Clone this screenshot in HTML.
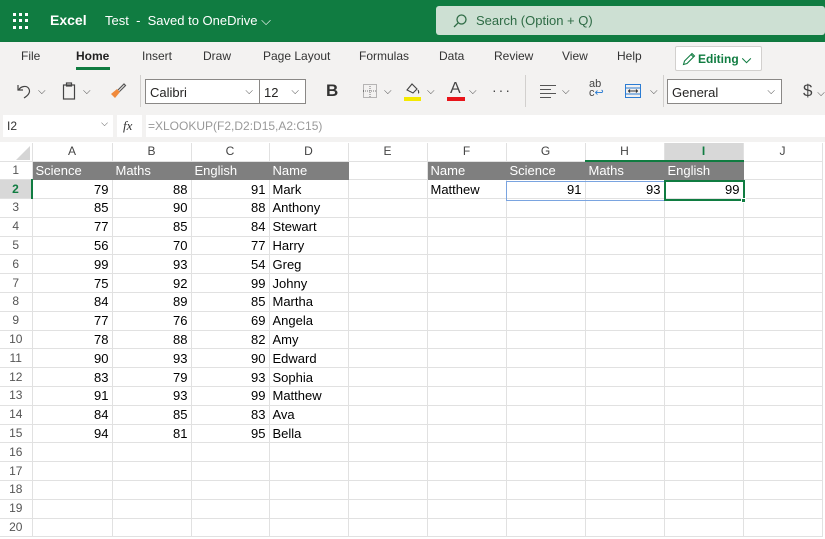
<!DOCTYPE html>
<html><head><meta charset="utf-8"><style>
*{box-sizing:border-box;margin:0;padding:0}
body{width:825px;height:539px;overflow:hidden;background:#fff;font-family:"Liberation Sans",sans-serif;position:relative;color:#252423}
.a{position:absolute}
.top{left:0;top:0;width:825px;height:42px;background:#107c41;color:#fff}
.rib{left:0;top:42px;width:825px;height:70px;background:#f3f2f1;box-shadow:0 1px 3px rgba(0,0,0,.15)}
.tab{top:49px;font-size:12px;color:#333}
.box{background:#fff;border:1px solid #8a8886;height:25px;top:79px;font-size:13px;padding:5px 4px}
.chev{font-size:10px;color:#444}
.fb{left:0;top:112px;width:825px;height:30px;background:#f3f2f1}
table{position:absolute;left:0;top:143px;border-collapse:collapse;table-layout:fixed;font-size:13px}
td{border:1px solid #e1e1e1;height:18.8px;padding:0 3px;white-space:nowrap;overflow:hidden;line-height:17px;color:#000}
td:first-child{border-left:none}
tr.h td{height:18px;background:#fff;color:#444;text-align:center;font-size:12px;border-color:#e1e1e1;border-top:none}
td.r{background:#fff;color:#555;text-align:center;font-size:12px;padding:0}
td.n{text-align:right}
td.g{background:#7f7f7f;color:#fff;border-color:#7f7f7f}
</style></head><body>
<div class="a top">
 <div class="a" style="left:13px;top:13px;width:16px;height:16px;display:grid;grid-template-columns:repeat(3,3px);gap:3px">
  <i style="background:#fff;width:3px;height:3px"></i><i style="background:#fff;width:3px;height:3px"></i><i style="background:#fff;width:3px;height:3px"></i><i style="background:#fff;width:3px;height:3px"></i><i style="background:#fff;width:3px;height:3px"></i><i style="background:#fff;width:3px;height:3px"></i><i style="background:#fff;width:3px;height:3px"></i><i style="background:#fff;width:3px;height:3px"></i><i style="background:#fff;width:3px;height:3px"></i>
 </div>
 <div class="a" style="left:50px;top:12px;font-size:14px;font-weight:bold">Excel</div>
 <div class="a" style="left:105px;top:13px;font-size:13px">Test &nbsp;-&nbsp; Saved to OneDrive ⌵</div>
 <div class="a" style="left:436px;top:6px;width:389px;height:29px;background:#cde0d3;border-radius:3px;color:#2e6b45;font-size:13px;padding:7px 0 0 40px">Search (Option + Q)
  <svg class="a" style="left:16px;top:7px" width="16" height="16" viewBox="0 0 16 16" fill="none" stroke="#2e6b45" stroke-width="1.3"><circle cx="9.5" cy="6.5" r="4.5"/><path d="M6.3 9.7L2 14"/></svg></div>
</div>
<div class="a rib"></div>
<div class="a tab" style="left:21px">File</div>
<div class="a tab" style="left:76px;font-weight:bold;color:#222">Home</div>
<div class="a" style="left:76px;top:67px;width:34px;height:3px;background:#107c41"></div>
<div class="a tab" style="left:142px">Insert</div>
<div class="a tab" style="left:203px">Draw</div>
<div class="a tab" style="left:263px">Page Layout</div>
<div class="a tab" style="left:359px">Formulas</div>
<div class="a tab" style="left:439px">Data</div>
<div class="a tab" style="left:494px">Review</div>
<div class="a tab" style="left:562px">View</div>
<div class="a tab" style="left:617px">Help</div>
<div class="a" style="left:675px;top:46px;width:87px;height:25px;background:#fff;border:1px solid #d2d0ce;border-radius:2px;color:#107c41;font-size:12px;font-weight:bold;padding:5px 0 0 22px">Editing ⌵
 <svg class="a" style="left:6px;top:5px" width="14" height="14" viewBox="0 0 14 14" fill="none" stroke="#107c41" stroke-width="1.1"><path d="M1.5 12.5L2.5 9L10 1.5L12.5 4L5 11.5Z M9 2.5L11.5 5"/></svg></div>
<!-- toolbar -->
<svg class="a" style="left:16px;top:83px" width="18" height="16" viewBox="0 0 18 16" fill="none" stroke="#444" stroke-width="1.2"><path d="M2 2V7H7"/><path d="M2.5 7C5 3 11 2 13 6C15 10 11 13 8 15"/></svg>
<div class="a chev" style="left:38px;top:86px">⌵</div>
<svg class="a" style="left:62px;top:82px" width="14" height="18" viewBox="0 0 14 18" fill="none" stroke="#444" stroke-width="1.2"><rect x="1.5" y="3" width="11" height="14"/><rect x="4.5" y="1" width="5" height="3"/></svg>
<div class="a chev" style="left:83px;top:86px">⌵</div>
<svg class="a" style="left:109px;top:82px" width="18" height="18" viewBox="0 0 18 18"><path d="M2 12L8 7L11 10L6 16Z" fill="#f08a3c"/><path d="M9 8L15 2L16.5 3.5L10.5 9.5" fill="none" stroke="#555" stroke-width="1.2"/></svg>
<div class="a" style="left:140px;top:75px;width:1px;height:32px;background:#d2d0ce"></div>
<div class="a box" style="left:145px;width:115px">Calibri<span class="a chev" style="right:6px;top:6px">⌵</span></div>
<div class="a box" style="left:259px;width:47px">12<span class="a chev" style="right:6px;top:6px">⌵</span></div>
<div class="a" style="left:326px;top:81px;font-size:17px;font-weight:bold;color:#333">B</div>
<svg class="a" style="left:362px;top:83px" width="16" height="16" viewBox="0 0 16 16" fill="none" stroke="#777" stroke-width="1" stroke-dasharray="1 1"><rect x="1.5" y="1.5" width="13" height="13"/><path d="M8 1V15M1 8H15"/></svg>
<div class="a chev" style="left:384px;top:86px">⌵</div>
<svg class="a" style="left:404px;top:81px" width="18" height="16" viewBox="0 0 18 16" fill="none" stroke="#444" stroke-width="1.1"><path d="M3 9L8 3L13 8L9 12Z"/><path d="M14 9C15 11 15 12 14 12"/></svg>
<div class="a" style="left:404px;top:97px;width:17px;height:4px;background:#f4e900"></div>
<div class="a chev" style="left:427px;top:86px">⌵</div>
<div class="a" style="left:450px;top:80px;font-size:16px;color:#444">A</div>
<div class="a" style="left:447px;top:97px;width:18px;height:4px;background:#e8141a"></div>
<div class="a chev" style="left:469px;top:86px">⌵</div>
<div class="a" style="left:492px;top:82px;font-size:14px;color:#444;letter-spacing:2px">···</div>
<div class="a" style="left:525px;top:75px;width:1px;height:32px;background:#d2d0ce"></div>
<svg class="a" style="left:540px;top:84px" width="16" height="15" viewBox="0 0 16 15" stroke="#555" stroke-width="1"><path d="M0 1.5H16M0 5.5H11M0 9.5H16M0 13.5H11"/></svg>
<div class="a chev" style="left:562px;top:86px">⌵</div>
<div class="a" style="left:589px;top:80px;font-size:11px;color:#444;line-height:9px">ab<br>c<span style="color:#2b7cd3">↩</span></div>
<svg class="a" style="left:624px;top:83px" width="18" height="16" viewBox="0 0 18 16" fill="none" stroke="#2b7cd3" stroke-width="1"><rect x="1.5" y="1.5" width="15" height="13"/><path d="M1 5H17M1 11H17"/><path d="M5 8H13M6 6.5L4.5 8L6 9.5M12 6.5L13.5 8L12 9.5" stroke="#333"/></svg>
<div class="a chev" style="left:650px;top:86px">⌵</div>
<div class="a" style="left:663px;top:75px;width:1px;height:32px;background:#d2d0ce"></div>
<div class="a box" style="left:667px;width:115px">General<span class="a chev" style="right:6px;top:6px">⌵</span></div>
<div class="a" style="left:803px;top:81px;font-size:17px;color:#444;white-space:nowrap">$ <span style="font-size:10px">⌵</span></div>
<!-- formula bar -->
<div class="a fb"></div>
<div class="a" style="left:3px;top:115px;width:110px;height:22px;background:#fff;font-size:12px;padding:4px 4px;color:#333">I2<span class="a chev" style="right:5px;top:3px;font-size:9px">⌵</span></div>
<div class="a" style="left:117px;top:115px;width:25px;height:22px;background:#fff;font-family:'Liberation Serif',serif;font-style:italic;font-size:13px;padding:3px 6px;color:#333">fx</div>
<div class="a" style="left:146px;top:115px;width:679px;height:22px;background:#fff;font-size:12px;padding:4px 2px;color:#999">=XLOOKUP(F2,D2:D15,A2:C15)</div>
<table>
<colgroup><col style="width:32px"><col style="width:80px"><col style="width:79px"><col style="width:78px"><col style="width:79px"><col style="width:79px"><col style="width:79px"><col style="width:79px"><col style="width:79px"><col style="width:79px"><col style="width:79px"></colgroup>
<tr class="h"><td style="position:relative"><svg class="a" style="left:16px;top:3px" width="14" height="14"><path d="M14 0V14H0Z" fill="#d5d5d5"/></svg></td><td>A</td><td>B</td><td>C</td><td>D</td><td>E</td><td>F</td><td>G</td><td style="border-bottom:2px solid #107c41">H</td><td style="background:#d8d8d8;color:#107c41;font-weight:bold;border-bottom:2px solid #107c41">I</td><td>J</td></tr>
<tr><td class="r">1</td><td class="g">Science</td><td class="g">Maths</td><td class="g">English</td><td class="g">Name</td><td></td><td class="g">Name</td><td class="g">Science</td><td class="g">Maths</td><td class="g">English</td><td></td></tr>
<tr><td class="r" style="background:#d8d8d8;color:#107c41;font-weight:bold;border-right:2px solid #107c41">2</td><td class="n">79</td><td class="n">88</td><td class="n">91</td><td>Mark</td><td></td><td>Matthew</td><td class="n">91</td><td class="n">93</td><td class="n">99</td><td></td></tr>
<tr><td class="r">3</td><td class="n">85</td><td class="n">90</td><td class="n">88</td><td>Anthony</td><td></td><td></td><td></td><td></td><td></td><td></td></tr>
<tr><td class="r">4</td><td class="n">77</td><td class="n">85</td><td class="n">84</td><td>Stewart</td><td></td><td></td><td></td><td></td><td></td><td></td></tr>
<tr><td class="r">5</td><td class="n">56</td><td class="n">70</td><td class="n">77</td><td>Harry</td><td></td><td></td><td></td><td></td><td></td><td></td></tr>
<tr><td class="r">6</td><td class="n">99</td><td class="n">93</td><td class="n">54</td><td>Greg</td><td></td><td></td><td></td><td></td><td></td><td></td></tr>
<tr><td class="r">7</td><td class="n">75</td><td class="n">92</td><td class="n">99</td><td>Johny</td><td></td><td></td><td></td><td></td><td></td><td></td></tr>
<tr><td class="r">8</td><td class="n">84</td><td class="n">89</td><td class="n">85</td><td>Martha</td><td></td><td></td><td></td><td></td><td></td><td></td></tr>
<tr><td class="r">9</td><td class="n">77</td><td class="n">76</td><td class="n">69</td><td>Angela</td><td></td><td></td><td></td><td></td><td></td><td></td></tr>
<tr><td class="r">10</td><td class="n">78</td><td class="n">88</td><td class="n">82</td><td>Amy</td><td></td><td></td><td></td><td></td><td></td><td></td></tr>
<tr><td class="r">11</td><td class="n">90</td><td class="n">93</td><td class="n">90</td><td>Edward</td><td></td><td></td><td></td><td></td><td></td><td></td></tr>
<tr><td class="r">12</td><td class="n">83</td><td class="n">79</td><td class="n">93</td><td>Sophia</td><td></td><td></td><td></td><td></td><td></td><td></td></tr>
<tr><td class="r">13</td><td class="n">91</td><td class="n">93</td><td class="n">99</td><td>Matthew</td><td></td><td></td><td></td><td></td><td></td><td></td></tr>
<tr><td class="r">14</td><td class="n">84</td><td class="n">85</td><td class="n">83</td><td>Ava</td><td></td><td></td><td></td><td></td><td></td><td></td></tr>
<tr><td class="r">15</td><td class="n">94</td><td class="n">81</td><td class="n">95</td><td>Bella</td><td></td><td></td><td></td><td></td><td></td><td></td></tr>
<tr><td class="r">16</td><td></td><td></td><td></td><td></td><td></td><td></td><td></td><td></td><td></td><td></td></tr>
<tr><td class="r">17</td><td></td><td></td><td></td><td></td><td></td><td></td><td></td><td></td><td></td><td></td></tr>
<tr><td class="r">18</td><td></td><td></td><td></td><td></td><td></td><td></td><td></td><td></td><td></td><td></td></tr>
<tr><td class="r">19</td><td></td><td></td><td></td><td></td><td></td><td></td><td></td><td></td><td></td><td></td></tr>
<tr><td class="r">20</td><td></td><td></td><td></td><td></td><td></td><td></td><td></td><td></td><td></td><td></td></tr>
</table>
<div class="a" style="left:506px;top:181px;width:159px;height:20px;border:1px solid #7aa4e0"></div>
<div class="a" style="left:664px;top:180px;width:81px;height:21px;border:2px solid #107c41"></div>
<div class="a" style="left:741px;top:198px;width:5px;height:5px;background:#107c41;border:1px solid #fff"></div>
</body></html>
